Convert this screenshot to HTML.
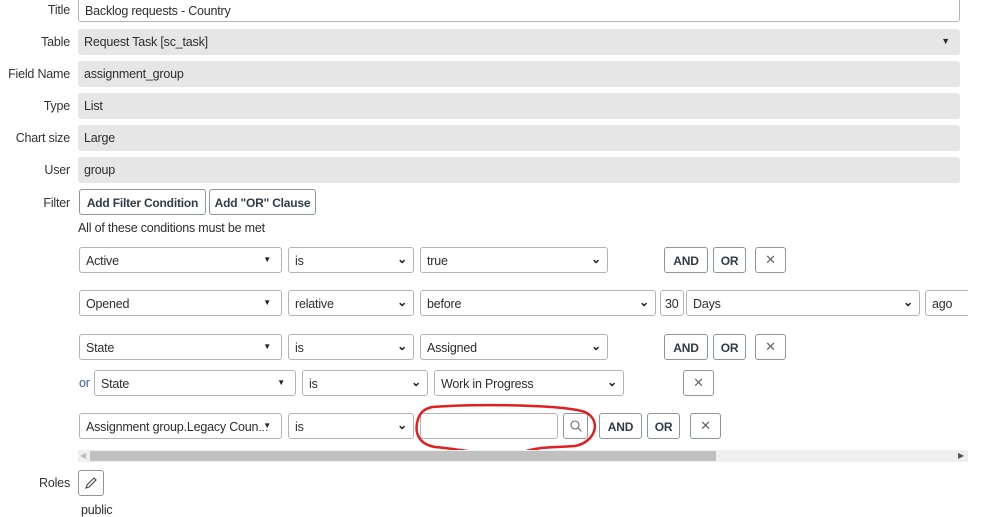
<!DOCTYPE html>
<html><head><style>
body{margin:0;width:1000px;height:517px;overflow:hidden;background:#fff;font-family:"Liberation Sans",sans-serif;font-size:12.5px;letter-spacing:-0.2px;color:#2e2e2e;position:relative}
.a{position:absolute;box-sizing:border-box;white-space:nowrap}
.lbl{position:absolute;right:930px;text-align:right;white-space:nowrap;color:#333}
.ro{position:absolute;left:78px;width:882px;height:26px;background:#e6e6e6;border-radius:3px;padding:6px 6px;box-sizing:border-box}
.sel{position:absolute;box-sizing:border-box;height:26px;border:1px solid #b4b4b4;border-radius:3px;padding:6px 6px;background:#fff;white-space:nowrap;overflow:hidden}
.sel .c{position:absolute;right:6px;top:4px;font-size:12px;font-weight:bold;color:#222}
.sel .t{position:absolute;right:10px;top:7px;font-size:8px;color:#222}
.btn{position:absolute;box-sizing:border-box;height:26px;border:1px solid #8a96a3;border-radius:3px;text-align:center;padding-top:6px;font-weight:bold;font-size:12px;color:#2e3d49;background:#fff;white-space:nowrap}
.x{font-weight:normal;color:#666;font-size:13px;padding-top:4px}
</style></head><body>
<div class="lbl" style="top:3px">Title</div>
<div class="a" style="left:78px;top:-4px;width:882px;height:26px;border:1px solid #b4b4b4;border-radius:3px;padding:7px 6px 0">Backlog requests - Country</div>
<div class="lbl" style="top:35px">Table</div>
<div class="ro" style="top:29px">Request Task [sc_task]<span style="position:absolute;right:10px;top:7px;font-size:9px">▼</span></div>
<div class="lbl" style="top:67px">Field Name</div><div class="ro" style="top:61px">assignment_group</div>
<div class="lbl" style="top:99px">Type</div><div class="ro" style="top:93px">List</div>
<div class="lbl" style="top:131px">Chart size</div><div class="ro" style="top:125px">Large</div>
<div class="lbl" style="top:163px">User</div><div class="ro" style="top:157px">group</div>
<div class="lbl" style="top:196px">Filter</div>
<div class="btn" style="left:79px;top:189px;width:127px">Add Filter Condition</div>
<div class="btn" style="left:209px;top:189px;width:107px">Add "OR" Clause</div>
<div class="a" style="left:78px;top:221px">All of these conditions must be met</div>

<div class="sel" style="left:79px;top:247px;width:203px">Active<span class="t">▼</span></div>
<div class="sel" style="left:288px;top:247px;width:126px">is<span class="c">⌄</span></div>
<div class="sel" style="left:420px;top:247px;width:188px">true<span class="c">⌄</span></div>
<div class="btn" style="left:664px;top:247px;width:44px">AND</div>
<div class="btn" style="left:713px;top:247px;width:33px">OR</div>
<div class="btn x" style="left:755px;top:247px;width:31px">✕</div>

<div class="sel" style="left:79px;top:290px;width:203px">Opened<span class="t">▼</span></div>
<div class="sel" style="left:288px;top:290px;width:126px">relative<span class="c">⌄</span></div>
<div class="sel" style="left:420px;top:290px;width:236px">before<span class="c">⌄</span></div>
<div class="sel" style="left:660px;top:290px;width:24px;padding-left:4px">30</div>
<div class="sel" style="left:686px;top:290px;width:234px">Days<span class="c">⌄</span></div>
<div class="a" style="left:925px;top:290px;width:43px;height:26px;overflow:hidden"><div class="sel" style="left:0;top:0;width:60px">ago</div></div>

<div class="sel" style="left:79px;top:334px;width:203px">State<span class="t">▼</span></div>
<div class="sel" style="left:288px;top:334px;width:126px">is<span class="c">⌄</span></div>
<div class="sel" style="left:420px;top:334px;width:188px">Assigned<span class="c">⌄</span></div>
<div class="btn" style="left:664px;top:334px;width:44px">AND</div>
<div class="btn" style="left:713px;top:334px;width:33px">OR</div>
<div class="btn x" style="left:755px;top:334px;width:31px">✕</div>

<div class="a" style="left:79px;top:376px;color:#3b5bc0">or</div>
<div class="sel" style="left:94px;top:370px;width:202px">State<span class="t">▼</span></div>
<div class="sel" style="left:302px;top:370px;width:126px">is<span class="c">⌄</span></div>
<div class="sel" style="left:434px;top:370px;width:190px">Work in Progress<span class="c">⌄</span></div>
<div class="btn x" style="left:683px;top:370px;width:31px">✕</div>

<div class="sel" style="left:79px;top:413px;width:203px">Assignment group.Legacy Coun...<span class="t" style="background:#fff;padding-left:4px;padding-right:4px;right:6px">▼</span></div>
<div class="sel" style="left:288px;top:413px;width:126px">is<span class="c">⌄</span></div>
<div class="sel" style="left:420px;top:413px;width:138px"></div>
<div class="btn" style="left:563px;top:413px;width:25px;padding-top:5px"><svg width="14" height="14" viewBox="0 0 14 14"><circle cx="6" cy="6" r="4" fill="none" stroke="#666" stroke-width="1.1"/><path d="M9 9l3.5 3.5" stroke="#666" stroke-width="1.1"/></svg></div>
<div class="btn" style="left:599px;top:413px;width:43px">AND</div>
<div class="btn" style="left:647px;top:413px;width:33px">OR</div>
<div class="btn x" style="left:690px;top:413px;width:31px">✕</div>
<svg class="a" style="left:410px;top:400px" width="190" height="60"><path d="M22 7 C60 4 150 4 175 12 C192 20 186 42 165 46 C140 48 130 46 110 53 C85 58 60 50 25 47 C8 44 4 32 8 19 C11 11 15 9 22 7Z" fill="none" stroke="#e02020" stroke-width="2.5"/></svg>

<div class="a" style="left:78px;top:450px;width:890px;height:12px;background:#f0f0f0"></div>
<div class="a" style="left:90px;top:451px;width:626px;height:10px;background:#c0c0c0"></div>
<div class="a" style="left:80px;top:451px;font-size:8px;color:#bbb">◀</div>
<div class="a" style="left:958px;top:451px;font-size:8px;color:#555">▶</div>

<div class="lbl" style="top:476px">Roles</div>
<div class="btn" style="left:78px;top:470px;width:26px;padding-top:5px;font-weight:normal"><svg width="14" height="14" viewBox="0 0 14 14"><path d="M2 12l1-3 7-7 2 2-7 7z" fill="none" stroke="#444" stroke-width="1.1"/></svg></div>
<div class="a" style="left:81px;top:503px">public</div>
</body></html>
